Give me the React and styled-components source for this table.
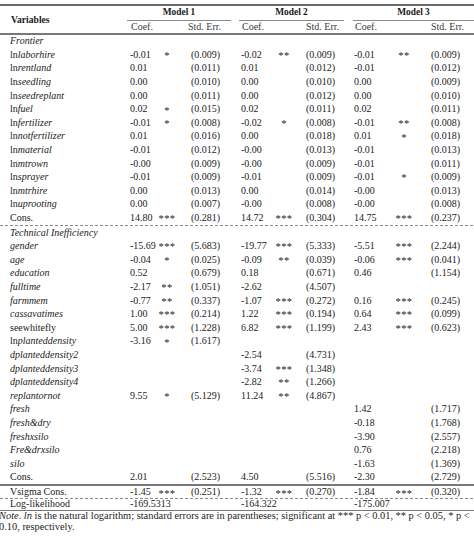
import React from 'react';
import styled, { createGlobalStyle } from 'styled-components';

const GlobalStyle = createGlobalStyle`
  html, body {
    margin: 0;
    padding: 0;
    background: #ffffff;
  }
  body {
    font-family: "Liberation Serif", "Times New Roman", serif;
    color: #222222;
  }
`;

// label | coef star se | coef star se | coef star se
const COLS = '127px 31px 18px 63px 33px 24px 57px 39px 24px 1fr';
const COEF_PAD = [3, 2, 1];
const SE_PAD = [15, 10, 15];

// label helpers: ln-prefixed italic, italic, roman
const L = (text) => ({ ln: true, text, italic: true });
const I = (text) => ({ text, italic: true });
const R = (text) => ({ text });

const frontier = [
  [L('laborhire'), ['-0.01', '*', '(0.009)'], ['-0.02', '**', '(0.009)'], ['-0.01', '**', '(0.009)']],
  [L('rentland'), ['0.01', '', '(0.011)'], ['0.01', '', '(0.012)'], ['-0.01', '', '(0.012)']],
  [L('seedling'), ['0.00', '', '(0.010)'], ['0.00', '', '(0.010)'], ['0.00', '', '(0.009)']],
  [L('seedreplant'), ['0.00', '', '(0.011)'], ['0.00', '', '(0.012)'], ['0.00', '', '(0.010)']],
  [L('fuel'), ['0.02', '*', '(0.015)'], ['0.02', '', '(0.011)'], ['0.02', '', '(0.011)']],
  [L('fertilizer'), ['-0.01', '*', '(0.008)'], ['-0.02', '*', '(0.008)'], ['-0.01', '**', '(0.008)']],
  [L('notfertilizer'), ['0.01', '', '(0.016)'], ['0.00', '', '(0.018)'], ['0.01', '*', '(0.018)']],
  [L('material'), ['-0.01', '', '(0.012)'], ['-0.00', '', '(0.013)'], ['-0.01', '', '(0.013)']],
  [L('mtrown'), ['-0.00', '', '(0.009)'], ['-0.00', '', '(0.009)'], ['-0.01', '', '(0.011)']],
  [L('sprayer'), ['-0.01', '', '(0.009)'], ['-0.01', '', '(0.009)'], ['-0.01', '*', '(0.009)']],
  [L('mtrhire'), ['0.00', '', '(0.013)'], ['0.00', '', '(0.014)'], ['-0.00', '', '(0.013)']],
  [L('uprooting'), ['0.00', '', '(0.007)'], ['-0.00', '', '(0.008)'], ['-0.00', '', '(0.008)']],
  [R('Cons.'), ['14.80', '***', '(0.281)'], ['14.72', '***', '(0.304)'], ['14.75', '***', '(0.237)']],
];

const inefficiency = [
  [I('gender'), ['-15.69', '***', '(5.683)'], ['-19.77', '***', '(5.333)'], ['-5.51', '***', '(2.244)']],
  [I('age'), ['-0.04', '*', '(0.025)'], ['-0.09', '**', '(0.039)'], ['-0.06', '***', '(0.041)']],
  [I('education'), ['0.52', '', '(0.679)'], ['0.18', '', '(0.671)'], ['0.46', '', '(1.154)']],
  [I('fulltime'), ['-2.17', '**', '(1.051)'], ['-2.62', '', '(4.507)'], null],
  [I('farmmem'), ['-0.77', '**', '(0.337)'], ['-1.07', '***', '(0.272)'], ['0.16', '***', '(0.245)']],
  [I('cassavatimes'), ['1.00', '***', '(0.214)'], ['1.22', '***', '(0.194)'], ['0.64', '***', '(0.099)']],
  [R('seewhitefly'), ['5.00', '***', '(1.228)'], ['6.82', '***', '(1.199)'], ['2.43', '***', '(0.623)']],
  [L('planteddensity'), ['-3.16', '*', '(1.617)'], null, null],
  [I('dplanteddensity2'), null, ['-2.54', '', '(4.731)'], null],
  [I('dplanteddensity3'), null, ['-3.74', '***', '(1.348)'], null],
  [I('dplanteddensity4'), null, ['-2.82', '**', '(1.266)'], null],
  [I('replantornot'), ['9.55', '*', '(5.129)'], ['11.24', '**', '(4.867)'], null],
  [I('fresh'), null, null, ['1.42', '', '(1.717)']],
  [I('fresh&dry'), null, null, ['-0.18', '', '(1.768)']],
  [I('freshxsilo'), null, null, ['-3.90', '', '(2.557)']],
  [I('Fre&drxsilo'), null, null, ['0.76', '', '(2.218)']],
  [I('silo'), null, null, ['-1.63', '', '(1.369)']],
  [R('Cons.'), ['2.01', '', '(2.523)'], ['4.50', '', '(5.516)'], ['-2.30', '', '(2.729)']],
];

function App() {
  const renderLabel = (label) => (
    <Label>
      {label.ln && <span>ln</span>}
      {label.italic ? <Em>{label.text}</Em> : label.text}
    </Label>
  );

  const renderModels = (models) =>
    models.map((m, i) => (
      <React.Fragment key={i}>
        <Coef $pad={COEF_PAD[i]}>{m ? m[0] : ''}</Coef>
        <Star>{m ? m[1] : ''}</Star>
        <StdErr $pad={SE_PAD[i]}>{m ? m[2] : ''}</StdErr>
      </React.Fragment>
    ));

  const renderRow = (row, key) => (
    <Row key={key}>
      {renderLabel(row[0])}
      {renderModels(row.slice(1))}
    </Row>
  );

  return (
    <>
      <GlobalStyle />
      <Page>
        <Rule $kind="top" />
        <Header>
          <HeadVar>Variables</HeadVar>
          {['Model 1', 'Model 2', 'Model 3'].map((m, i) => (
            <ModelCell key={m} $col={2 + i * 3} $gap={[8, 9, 0][i]}>
              {m}
            </ModelCell>
          ))}
          {[0, 1, 2].map((i) => (
            <React.Fragment key={i}>
              <SubHead $col={2 + i * 3} $pad={COEF_PAD[i] + 1}>Coef.</SubHead>
              <SubHead $col={4 + i * 3} $pad={SE_PAD[i] - (i === 0 ? 3 : 0)}>Std. Err.</SubHead>
            </React.Fragment>
          ))}
        </Header>
        <Rule $kind="thick" />

        <Row>
          <Section>Frontier</Section>
        </Row>
        {frontier.map((r, i) => renderRow(r, 'f' + i))}
        <Rule $kind="dashed" />

        <Row>
          <Section>Technical Inefficiency</Section>
        </Row>
        {inefficiency.map((r, i) => renderRow(r, 't' + i))}
        <Rule $kind="solid" />

        <Row $h={12}>
          {renderLabel(R('Vsigma Cons.'))}
          {renderModels([
            ['-1.45', '***', '(0.251)'],
            ['-1.32', '***', '(0.270)'],
            ['-1.84', '***', '(0.320)'],
          ])}
        </Row>
        <Rule $kind="dashed" />
        <Row $h={11}>
          {renderLabel(R('Log-likelihood'))}
          <Coef $pad={3} $span={3}>-169.5313</Coef>
          <Coef $pad={2} $span={3}>-164.322</Coef>
          <Coef $pad={1} $span={3}>-175.007</Coef>
        </Row>
        <Rule $kind="solid" />

        <Note>
          <NoteLine>
            <Em>Note</Em>. <Em>ln</Em> is the natural logarithm; standard errors are in parentheses;
            significant at *** p &lt; 0.01, ** p &lt; 0.05, * p &lt;
          </NoteLine>
          <NoteLine>0.10, respectively.</NoteLine>
        </Note>
      </Page>
    </>
  );
}

export default App;

const Page = styled.div`
  width: 474px;
  height: 537px;
  overflow: hidden;
  padding-top: 4px;
  box-sizing: border-box;
`;

const Rule = styled.div`
  height: ${({ $kind }) => ($kind === 'dashed' ? 1 : $kind === 'solid' ? 1.5 : 2)}px;
  background: ${({ $kind }) =>
    $kind === 'dashed'
      ? 'repeating-linear-gradient(90deg, #8c8c8c 0 3px, transparent 3px 5px)'
      : $kind === 'top'
        ? '#6a6a6a'
        : '#787878'};
`;

const Header = styled.div`
  display: grid;
  grid-template-columns: ${COLS};
  grid-template-rows: 14.5px 12px;
  font-size: 10px;
  line-height: 1;
`;

const HeadVar = styled.div`
  grid-column: 1;
  grid-row: 1 / 3;
  align-self: center;
  padding: 2px 0 0 11px;
  font-weight: bold;
  font-size: 9.6px;
  color: #1a1a1a;
`;

const ModelCell = styled.div`
  grid-column: ${({ $col }) => `${$col} / span 3`};
  grid-row: 1;
  margin-right: ${({ $gap }) => $gap}px;
  border-bottom: 1.5px solid #8a8a8a;
  display: flex;
  align-items: flex-end;
  justify-content: center;
  padding-bottom: 2px;
  font-weight: bold;
  font-size: 9.4px;
  color: #1a1a1a;
`;

const SubHead = styled.div`
  grid-column: ${({ $col }) => $col};
  grid-row: 2;
  align-self: end;
  padding-left: ${({ $pad }) => $pad}px;
  padding-bottom: 1px;
  white-space: nowrap;
  color: #3a3a3a;
`;

const Row = styled.div`
  display: grid;
  grid-template-columns: ${COLS};
  height: ${({ $h }) => $h || 13.6}px;
  align-items: center;
  font-size: 10px;
  line-height: 1;
  white-space: nowrap;
`;

const Label = styled.div`
  padding-left: 10px;
`;

const Em = styled.i`
  font-style: italic;
`;

const Section = styled.div`
  grid-column: 1 / span 4;
  padding-left: 10px;
  font-style: italic;
`;

const Coef = styled.div`
  padding-left: ${({ $pad }) => $pad}px;
  ${({ $span }) => ($span ? `grid-column: span ${$span};` : '')}
`;

const Star = styled.div`
  text-align: center;
  font-size: 10.5px;
  letter-spacing: 0.4px;
  padding-top: 3px;
`;

const StdErr = styled.div`
  padding-left: ${({ $pad }) => $pad}px;
`;

const Note = styled.div`
  margin-left: -1px;
  font-size: 10.4px;
  line-height: 10.5px;
  white-space: nowrap;
  color: #1e1e1e;
`;

const NoteLine = styled.div`
  overflow: hidden;
`;
